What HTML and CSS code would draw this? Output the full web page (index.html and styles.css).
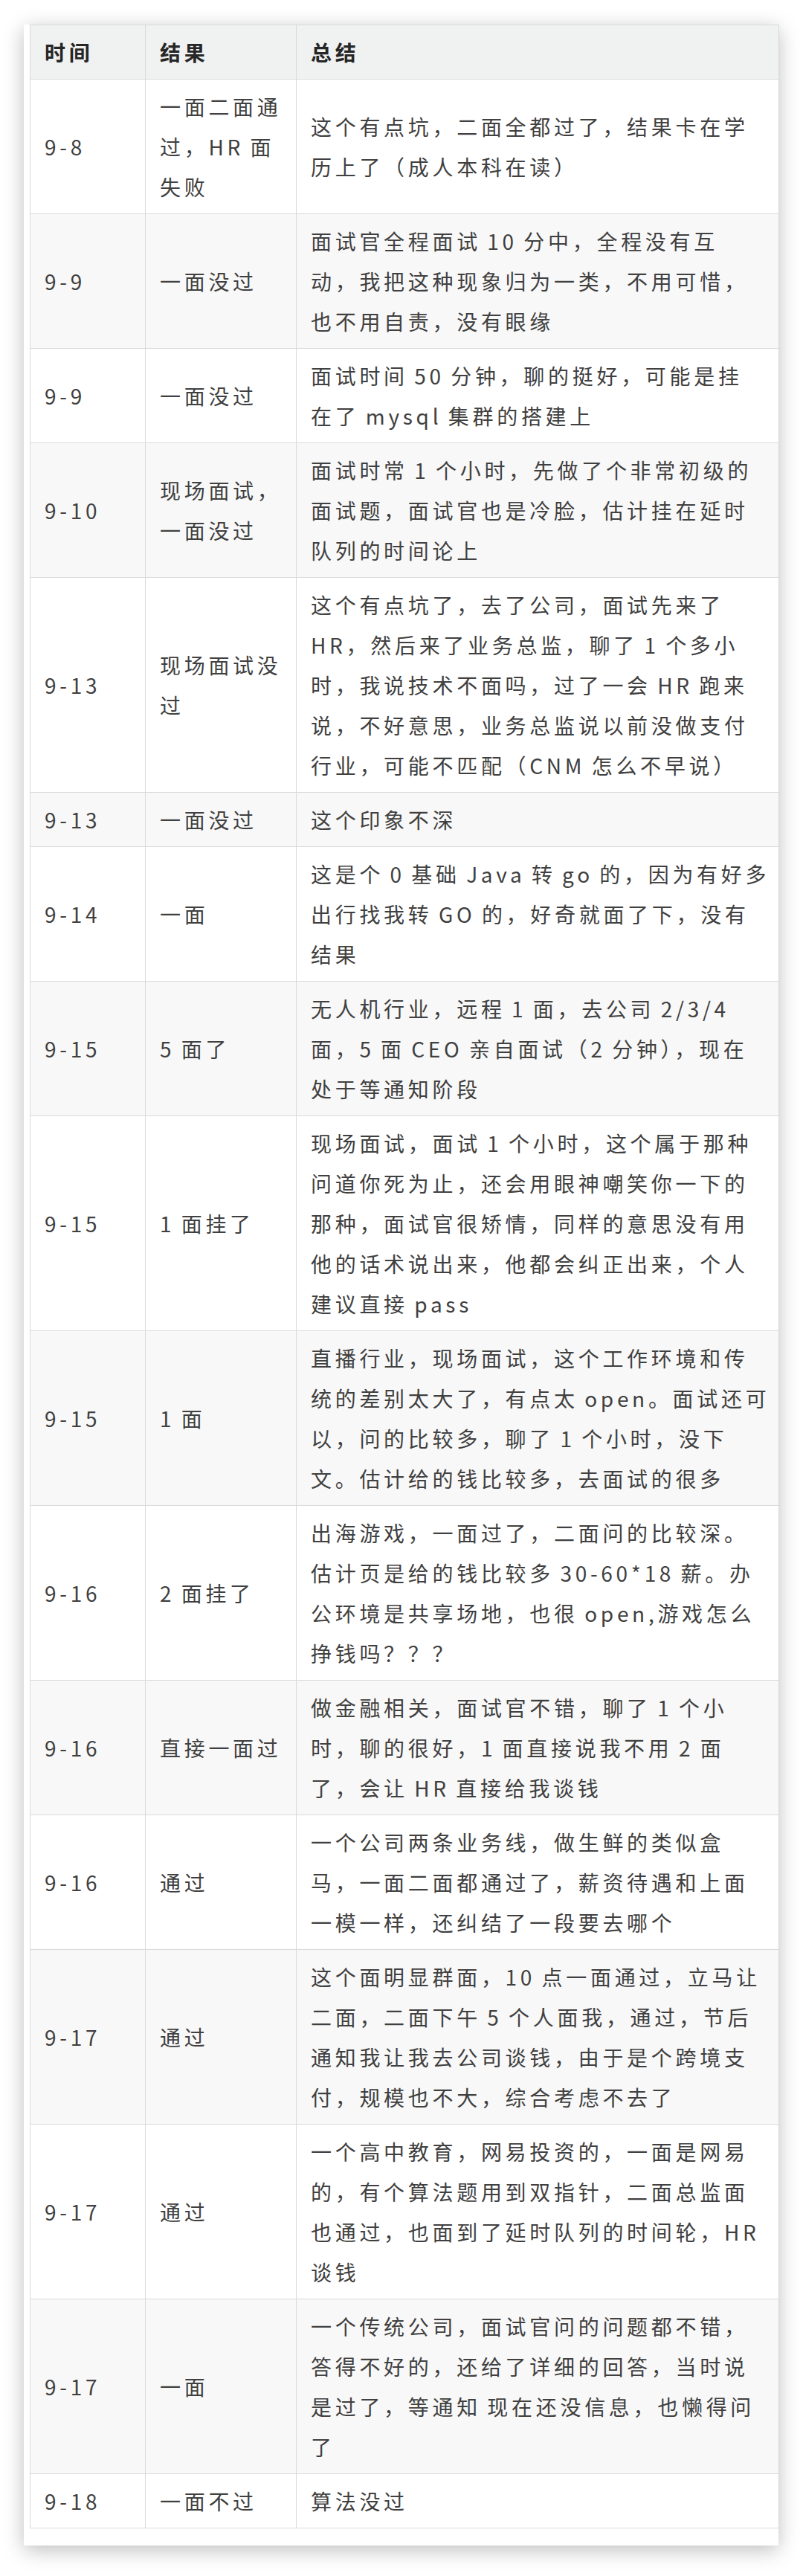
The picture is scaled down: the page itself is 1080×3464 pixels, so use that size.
FILE: index.html
```html
<!DOCTYPE html>
<html lang="zh-CN">
<head>
<meta charset="utf-8">
<title>面试记录</title>
<link rel="stylesheet" href="styles.css">
</head>
<body>
<div class="page">
  <div class="card">
    <table class="log">
      <colgroup>
        <col class="c-date">
        <col class="c-result">
        <col class="c-note">
      </colgroup>
      <thead>
        <tr><th>时间</th><th>结果</th><th>总结</th></tr>
      </thead>
      <tbody>
        <tr><td>9-8</td><td>一面二面通<br>过，HR 面<br>失败</td><td>这个有点坑，二面全都过了，结果卡在学<br>历上了（成人本科在读）</td></tr>
        <tr><td>9-9</td><td>一面没过</td><td>面试官全程面试 10 分中，全程没有互<br>动，我把这种现象归为一类，不用可惜，<br>也不用自责，没有眼缘</td></tr>
        <tr><td>9-9</td><td>一面没过</td><td>面试时间 50 分钟，聊的挺好，可能是挂<br>在了 mysql 集群的搭建上</td></tr>
        <tr><td>9-10</td><td>现场面试，<br>一面没过</td><td>面试时常 1 个小时，先做了个非常初级的<br>面试题，面试官也是冷脸，估计挂在延时<br>队列的时间论上</td></tr>
        <tr><td>9-13</td><td>现场面试没<br>过</td><td>这个有点坑了，去了公司，面试先来了<br>HR，然后来了业务总监，聊了 1 个多小<br>时，我说技术不面吗，过了一会 HR 跑来<br>说，不好意思，业务总监说以前没做支付<br>行业，可能不匹配（CNM 怎么不早说）</td></tr>
        <tr><td>9-13</td><td>一面没过</td><td>这个印象不深</td></tr>
        <tr><td>9-14</td><td>一面</td><td>这是个 0 基础 Java 转 go 的，因为有好多<br>出行找我转 GO 的，好奇就面了下，没有<br>结果</td></tr>
        <tr><td>9-15</td><td>5 面了</td><td>无人机行业，远程 1 面，去公司 2/3/4<br>面，5 面 CEO 亲自面试（2 分钟），现在<br>处于等通知阶段</td></tr>
        <tr><td>9-15</td><td>1 面挂了</td><td>现场面试，面试 1 个小时，这个属于那种<br>问道你死为止，还会用眼神嘲笑你一下的<br>那种，面试官很矫情，同样的意思没有用<br>他的话术说出来，他都会纠正出来，个人<br>建议直接 pass</td></tr>
        <tr><td>9-15</td><td>1 面</td><td>直播行业，现场面试，这个工作环境和传<br>统的差别太大了，有点太 open。面试还可<br>以，问的比较多，聊了 1 个小时，没下<br>文。估计给的钱比较多，去面试的很多</td></tr>
        <tr><td>9-16</td><td>2 面挂了</td><td>出海游戏，一面过了，二面问的比较深。<br>估计页是给的钱比较多 30-60*18 薪。办<br>公环境是共享场地，也很 open,游戏怎么<br>挣钱吗？？？</td></tr>
        <tr><td>9-16</td><td>直接一面过</td><td>做金融相关，面试官不错，聊了 1 个小<br>时，聊的很好，1 面直接说我不用 2 面<br>了，会让 HR 直接给我谈钱</td></tr>
        <tr><td>9-16</td><td>通过</td><td>一个公司两条业务线，做生鲜的类似盒<br>马，一面二面都通过了，薪资待遇和上面<br>一模一样，还纠结了一段要去哪个</td></tr>
        <tr><td>9-17</td><td>通过</td><td>这个面明显群面，10 点一面通过，立马让<br>二面，二面下午 5 个人面我，通过，节后<br>通知我让我去公司谈钱，由于是个跨境支<br>付，规模也不大，综合考虑不去了</td></tr>
        <tr><td>9-17</td><td>通过</td><td>一个高中教育，网易投资的，一面是网易<br>的，有个算法题用到双指针，二面总监面<br>也通过，也面到了延时队列的时间轮，HR<br>谈钱</td></tr>
        <tr><td>9-17</td><td>一面</td><td>一个传统公司，面试官问的问题都不错，<br>答得不好的，还给了详细的回答，当时说<br>是过了，等通知 现在还没信息，也懒得问<br>了</td></tr>
        <tr><td>9-18</td><td>一面不过</td><td>算法没过</td></tr>
      </tbody>
    </table>
  </div>
</div>
</body>
</html>
```

FILE: styles.css
```css
html, body {
  margin: 0;
  padding: 0;
  background: #ffffff;
}

.page {
  padding: 33px 33px 40px 32px;
}

.card {
  width: 1015px;
  box-sizing: border-box;
  padding: 0 0 23px 8px;
  background: #ffffff;
  box-shadow: 0 6px 26px rgba(0, 0, 0, 0.26);
}

.log {
  width: 1007px;
  table-layout: fixed;
  border-collapse: collapse;
  font-family: "Noto Sans CJK SC", "Noto Sans", sans-serif;
  font-size: 28px;
  letter-spacing: 4.7px;
  word-spacing: -2.5px;
  line-height: 54px;
  color: #404040;
}

.c-date { width: 155px; }
.c-result { width: 203px; }
.c-note { width: 649px; }

.log th,
.log td {
  border: 1px solid #dadada;
  padding: 9px 2px 9px 19px;
  text-align: left;
  vertical-align: middle;
  white-space: nowrap;
}

.log th {
  background: #f0f1f1;
  font-weight: 700;
  color: #262626;
}

.log tbody tr:nth-child(even) td {
  background: #f8f8f8;
}

.log tbody tr:nth-child(odd) td {
  background: #ffffff;
}
```
